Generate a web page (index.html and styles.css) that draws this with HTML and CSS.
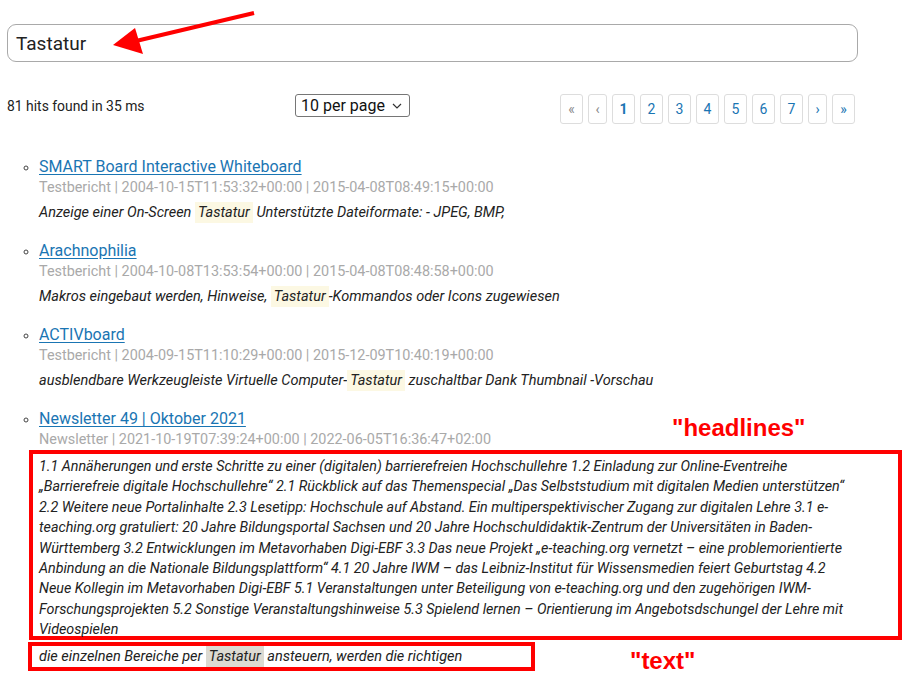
FILE: index.html
```
<!DOCTYPE html>
<html lang="de">
<head>
<meta charset="utf-8">
<title>Suche</title>
<link rel="stylesheet" href="styles.css">
</head>
<body>
<div class="page">
  <div class="search"><span class="search-value">Tastatur</span></div>

  <div class="status">
    <div class="hits">81 hits found in 35 ms</div>
    <div class="select">
      <span>10 per page</span>
      <svg class="chev" width="10" height="6" viewBox="0 0 10 6"><path d="M1 1 L5 5 L9 1" fill="none" stroke="#333" stroke-width="1.2"/></svg>
    </div>
    <nav class="pager">
      <span class="pg muted">«</span>
      <span class="pg muted narrow">‹</span>
      <span class="pg active">1</span>
      <span class="pg">2</span>
      <span class="pg">3</span>
      <span class="pg">4</span>
      <span class="pg">5</span>
      <span class="pg">6</span>
      <span class="pg">7</span>
      <span class="pg narrow">›</span>
      <span class="pg">»</span>
    </nav>
  </div>

  <ul class="results">
    <li class="item">
      <a class="title" href="#">SMART Board Interactive Whiteboard</a>
      <div class="meta">Testbericht | 2004-10-15T11:53:32+00:00 | 2015-04-08T08:49:15+00:00</div>
      <div class="snippet">Anzeige einer On-Screen <mark class="hl">Tastatur</mark> Unterstützte Dateiformate: - JPEG, BMP,</div>
    </li>
    <li class="item">
      <a class="title" href="#">Arachnophilia</a>
      <div class="meta">Testbericht | 2004-10-08T13:53:54+00:00 | 2015-04-08T08:48:58+00:00</div>
      <div class="snippet">Makros eingebaut werden, Hinweise, <mark class="hl">Tastatur</mark>-Kommandos oder Icons zugewiesen</div>
    </li>
    <li class="item">
      <a class="title" href="#">ACTIVboard</a>
      <div class="meta">Testbericht | 2004-09-15T11:10:29+00:00 | 2015-12-09T10:40:19+00:00</div>
      <div class="snippet">ausblendbare Werkzeugleiste Virtuelle Computer-<mark class="hl">Tastatur</mark> zuschaltbar Dank Thumbnail -Vorschau</div>
    </li>
    <li class="item">
      <a class="title" href="#">Newsletter 49 | Oktober 2021</a>
      <div class="meta">Newsletter | 2021-10-19T07:39:24+00:00 | 2022-06-05T16:36:47+02:00</div>
      <div class="headlines">1.1 Annäherungen und erste Schritte zu einer (digitalen) barrierefreien Hochschullehre 1.2 Einladung zur Online-Eventreihe<br>„Barrierefreie digitale Hochschullehre“ 2.1 Rückblick auf das Themenspecial „Das Selbststudium mit digitalen Medien unterstützen“<br>2.2 Weitere neue Portalinhalte 2.3 Lesetipp: Hochschule auf Abstand. Ein multiperspektivischer Zugang zur digitalen Lehre 3.1 e-<br>teaching.org gratuliert: 20 Jahre Bildungsportal Sachsen und 20 Jahre Hochschuldidaktik-Zentrum der Universitäten in Baden-<br>Württemberg 3.2 Entwicklungen im Metavorhaben Digi-EBF 3.3 Das neue Projekt „e-teaching.org vernetzt – eine problemorientierte<br>Anbindung an die Nationale Bildungsplattform“ 4.1 20 Jahre IWM – das Leibniz-Institut für Wissensmedien feiert Geburtstag 4.2<br>Neue Kollegin im Metavorhaben Digi-EBF 5.1 Veranstaltungen unter Beteiligung von e-teaching.org und den zugehörigen IWM-<br>Forschungsprojekten 5.2 Sonstige Veranstaltungshinweise 5.3 Spielend lernen – Orientierung im Angebotsdschungel der Lehre mit<br>Videospielen</div>
      <div class="textbox">die einzelnen Bereiche per <mark class="hl sel">Tastatur</mark> ansteuern, werden die richtigen</div>
    </li>
  </ul>
</div>

<svg class="arrow" width="913" height="677" viewBox="0 0 913 677">
  <line x1="254" y1="13" x2="136" y2="41" stroke="#ff0000" stroke-width="4"/>
  <polygon points="113,45 135,28 143,54" fill="#ff0000"/>
</svg>
<div class="label label-headlines">"headlines"</div>
<div class="label label-text">"text"</div>
</body>
</html>
```
FILE: styles.css
```
html, body {
  margin: 0;
  padding: 0;
  background: #ffffff;
  overflow: hidden;
}

body {
  font-family: Roboto, "Liberation Sans", Arial, sans-serif;
  color: #222222;
  position: relative;
  width: 913px;
  height: 677px;
}

.page {
  padding: 24px 0 0 7px;
  width: 851px;
}

.search {
  box-sizing: border-box;
  height: 38px;
  border: 1px solid #a9a9a9;
  border-radius: 9px;
  padding: 0 8px;
  display: flex;
  align-items: center;
}

.search-value {
  font-size: 19px;
  color: #222;
  padding-top: 1px;
}

.status {
  margin-top: 32px;
  display: grid;
  grid-template-columns: 288px 1fr auto;
  align-items: center;
  height: 30px;
}

.hits {
  font-size: 13.9px;
  color: #222;
  margin-top: -7px;
}

.select {
  box-sizing: border-box;
  width: 115px;
  height: 23px;
  border: 1px solid #767676;
  border-radius: 3px;
  display: flex;
  align-items: center;
  justify-content: space-between;
  padding: 0 7px 0 5px;
  font-size: 16px;
  color: #111;
  margin-top: -7px;
}

.chev {
  display: block;
}

.pager {
  display: flex;
  gap: 5px;
  margin-right: 3px;
}

.pg {
  box-sizing: border-box;
  min-width: 23px;
  height: 30px;
  padding: 0 6px;
  border: 1px solid #dddddd;
  border-radius: 3px;
  display: flex;
  align-items: center;
  justify-content: center;
  font-size: 14px;
  color: #1a75b3;
}

.pg.narrow {
  min-width: 19px;
  padding: 0 5px;
}

.pg.muted {
  color: #888888;
}

.pg.active {
  font-weight: 700;
}

.results {
  list-style: circle;
  margin: 32px 0 0 0;
  padding-left: 32px;
}

.item {
  margin-bottom: 17px;
  font-size: 14px;
}

.item::marker {
  color: #444;
  font-size: 13px;
}

.title {
  display: block;
  font-size: 16px;
  line-height: 22px;
  color: #1a75b3;
  text-decoration: underline;
  text-underline-offset: 2px;
}

.meta {
  font-size: 14.4px;
  line-height: 20px;
  color: #a9a9a9;
}

.snippet {
  margin-top: 5px;
  font-size: 14.5px;
  line-height: 20px;
  font-style: italic;
  color: #222;
}

.hl {
  background: #fcf8e3;
  color: #222;
  padding: 2px 3px;
}

.hl.sel {
  background: #dcdad2;
}

.headlines {
  box-sizing: border-box;
  width: 873px;
  height: 190px;
  margin-left: -10px;
  border: 4px solid #ff0000;
  padding: 2px 8px 0 6px;
  font-size: 14.3px;
  line-height: 20.4px;
  font-style: italic;
  color: #222;
  white-space: nowrap;
  overflow: visible;
}

.textbox {
  box-sizing: border-box;
  width: 507px;
  height: 29px;
  margin-top: 2px;
  margin-left: -11px;
  border: 4px solid #ff0000;
  padding: 0 7px;
  font-size: 14.5px;
  line-height: 21px;
  font-style: italic;
  color: #222;
}

.arrow {
  position: absolute;
  left: 0;
  top: 0;
  pointer-events: none;
}

.label {
  position: absolute;
  font-family: "Liberation Sans", Arial, sans-serif;
  font-weight: 700;
  font-size: 24px;
  line-height: 26px;
  color: #ff0000;
}

.label-headlines {
  left: 672px;
  top: 415px;
}

.label-text {
  left: 630px;
  top: 648px;
}
```
